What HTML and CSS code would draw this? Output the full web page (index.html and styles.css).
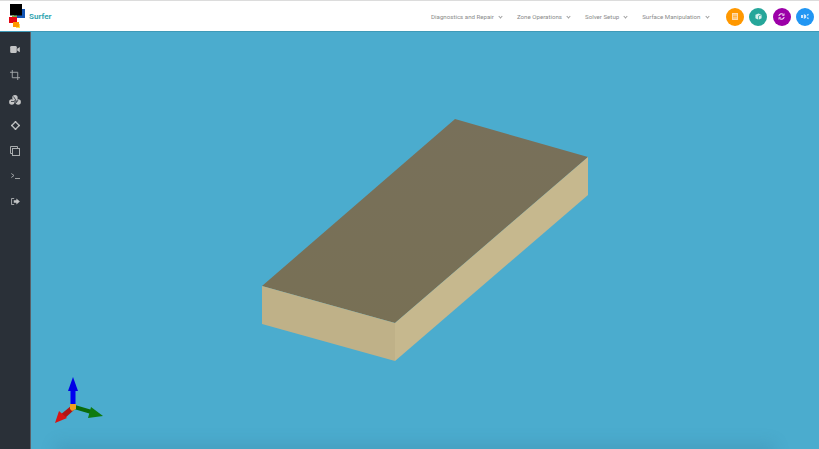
FILE: index.html
```html
<!DOCTYPE html>
<html lang="en">
<head>
  <meta charset="UTF-8" />
  <meta name="viewport" content="width=device-width, initial-scale=1" />
  <title>Surfer</title>
  <link rel="stylesheet" href="styles.css">
</head>
<body>
  <header class="topbar">
    <a class="brand" href="#">
      <svg class="brand-logo" width="18" height="26" viewBox="0 0 18 26">
        <rect x="5" y="5" width="11" height="9" fill="#1255b5" />
        <rect x="1" y="0" width="12" height="11.500" fill="#000" />
        <rect x="3" y="11.500" width="5" height="3" fill="#7cb342" />
        <rect x="0" y="13" width="8" height="6" fill="#e30613" />
        <rect x="7" y="20" width="4" height="4" fill="#ffe14d" />
        <rect x="4" y="18" width="6" height="5" fill="#ff9800" />
      </svg>
      <span class="brand-name">Surfer</span>
    </a>

    <nav class="menu">
      <a href="#">Diagnostics and Repair <i class="caret"></i></a>
      <a href="#">Zone Operations <i class="caret"></i></a>
      <a href="#">Solver Setup <i class="caret"></i></a>
      <a href="#">Surface Manipulation <i class="caret"></i></a>
    </nav>

    <div class="actions">
      <button class="round orange">
        <svg width="6" height="7" viewBox="0 0 6 7"><path d="M0 0h6v7H0z" fill="#ffdcae" /><path d="M1 2h4M1 3.500h4M1 5h4" stroke="#ff9800" stroke-width=".6" /></svg>
      </button>
      <button class="round teal">
        <svg width="7" height="7" viewBox="0 0 8 8"><path d="M4 .5 7.500 2v4L4 7.700.5 6V2z" fill="#d8f0ed" /><path d="M4 3.400 7.500 2M4 3.400V8" stroke="#26a69a" stroke-width=".8" /></svg>
      </button>
      <button class="round purple">
        <svg width="7" height="7" viewBox="0 0 8 8" fill="none" stroke="#f0d8f2" stroke-width="1.300"><path d="M1 3.400A3 3 0 0 1 6.300 2M7 4.600A3 3 0 0 1 1.700 6" /><path d="M7 .5v2.400H4.800M1 7.500V5.100h2.200" stroke-width=".9" /></svg>
      </button>
      <button class="round blue">
        <svg width="8" height="7" viewBox="0 0 10 8" fill="#cfe7fc"><path d="M0 2h2.500v4H0zM3.500 1l3 1.500v3l-3 1.500z" /><path d="M7.500 1.500 9.500 .5v2l-2 .5zM7.500 5l2 .5v2l-2-1z" /></svg>
      </button>
    </div>
  </header>

  <div class="workspace">
    <aside class="sidebar">
      <a href="#">
        <svg width="10" height="7" viewBox="0 0 11 8"><rect width="7.500" height="8" rx="1.500" fill="#c4c5c6" /><path d="M8 3 11 1v6L8 5z" fill="#c4c5c6" /></svg>
      </a>
      <a href="#">
        <svg width="10" height="10" viewBox="0 0 11 11" fill="none" stroke="#a9acae" stroke-width="1"><path d="M2.500 0v8.500H11M0 2.500h8.500V11" /></svg>
      </a>
      <a href="#">
        <svg width="12" height="10" viewBox="0 0 12 10" fill="#c4c5c6"><circle cx="2.800" cy="7" r="2.700" /><circle cx="9.200" cy="7" r="2.700" /><circle cx="6" cy="2.800" r="2.700" /><path d="M4.500 1.500 8 7M2 6.500h3M9 5l-2 3" stroke="#2a3038" stroke-width=".8" /></svg>
      </a>
      <a href="#">
        <svg width="9" height="9" viewBox="0 0 10 10"><path d="M5 .8 9.200 5 5 9.200 .8 5z" fill="none" stroke="#b8babc" stroke-width="1.500" /><circle cx="5" cy=".9" r=".9" fill="#c4c5c6" /><circle cx="5" cy="9.100" r=".9" fill="#c4c5c6" /><circle cx=".9" cy="5" r=".9" fill="#c4c5c6" /><circle cx="9.100" cy="5" r=".9" fill="#c4c5c6" /></svg>
      </a>
      <a href="#">
        <svg width="10" height="10" viewBox="0 0 10 10" fill="none" stroke="#a9acae" stroke-width="1"><path d="M7.500 2.500V.5h-7v7h2" /><rect x="2.500" y="2.500" width="7" height="7" /></svg>
      </a>
      <a href="#">
        <svg width="9" height="6" viewBox="0 0 9 6" fill="none" stroke="#a9acae" stroke-width=".9"><path d="M.3.500 3 2.500.3 4.500M4 5.500h5" /></svg>
      </a>
      <a href="#">
        <svg width="9" height="7" viewBox="0 0 10 8"><path d="M3.500.5H.5v7h3" fill="none" stroke="#b8babc" /><path d="M3 2.500h3V.500L10 4 6 7.500v-2H3z" fill="#c4c5c6" /></svg>
      </a>
    </aside>

    <main class="viewport">
      <svg class="scene" viewBox="31 32 788 417" preserveAspectRatio="none">
        <defs>
          <linearGradient id="topFace" x1="0" y1="0" x2="0" y2="1">
            <stop offset="0" stop-color="#78705a" />
            <stop offset="1" stop-color="#787055" />
          </linearGradient>
        </defs>
        <!-- box -->
        <polygon points="455,119 588,157 395,323 262,286" fill="url(#topFace)" />
        <polygon points="262,286 395,323 395,361 262,324" fill="#bfb188" />
        <polygon points="395,323 588,157 588,195 395,361" fill="#c6b88e" />

        <!-- axes -->
        <polygon points="70.500,388 70.500,406 75.500,406 75.500,388" fill="#0000f0" />
        <polygon points="73,377 78,391 68,391" fill="#0000e6" />
        <polygon points="75,405 92,410 91,414 74,409" fill="#0b6b0b" />
        <polygon points="103,416 88,418 91,407" fill="#0f7a0f" />
        <polygon points="71,406 75,409 64,419 60,415" fill="#b01414" />
        <polygon points="55,423 59,411 67,418" fill="#d81414" />
        <polygon points="70,404 76,404 76,409 72,411 70,409" fill="#f0a020" />
      </svg>
      <div class="floor-shade"></div>
    </main>
  </div>
</body>
</html>
```

FILE: styles.css
```css
:root {
  --fundo: #4bacce;
  --lateral: #2a3038;
  --texto-menu: #8b8b8b;
}

html,
body {
  height: 100%;
}

body {
  margin: 0;
  display: flex;
  flex-direction: column;
  overflow: hidden;
  font-family: Roboto, "Liberation Sans", sans-serif;
  background: var(--fundo);
}

.topbar {
  height: 30px;
  display: flex;
  align-items: center;
  flex-shrink: 0;
  background: #fff;
  border-top: 1px solid #dcdcdc;
  border-bottom: 1px solid #3f9ab8;
}

.brand {
  display: flex;
  align-items: center;
  margin-left: 9px;
  padding-top: 2px;
  text-decoration: none;
}

.brand-name {
  margin-left: 2px;
  margin-top: -2px;
  font-size: 8px;
  font-weight: 700;
  color: #34a6b2;
}

.menu {
  display: flex;
  gap: 14px;
  margin-left: auto;
  padding-top: 1px;
}

.menu a {
  display: flex;
  align-items: center;
  font-size: 6.150px;
  color: var(--texto-menu);
  text-decoration: none;
}

.caret {
  width: 2px;
  height: 2px;
  margin-left: 5px;
  margin-right: 1px;
  margin-top: -1px;
  border-right: 0.6px solid #a0a0a0;
  border-bottom: 0.6px solid #a0a0a0;
  transform: rotate(45deg);
}

.actions {
  display: flex;
  gap: 5.500px;
  margin-left: 16px;
  margin-right: 5px;
  padding-top: 1px;
}

.round {
  width: 18px;
  height: 18px;
  padding: 0;
  display: flex;
  align-items: center;
  justify-content: center;
  border: none;
  border-radius: 50%;
}

.orange { background: #ff9800; }
.teal { background: #26a69a; }
.purple { background: #9c00a8; }
.blue { background: #2196f3; }

.workspace {
  flex: 1;
  display: flex;
  min-height: 0;
}

.sidebar {
  width: 30px;
  flex-shrink: 0;
  display: flex;
  flex-direction: column;
  align-items: center;
  padding-top: 4.500px;
  background: var(--lateral);
  border-right: 1px solid #5a6068;
}

.sidebar a {
  height: 25.400px;
  display: flex;
  align-items: center;
  justify-content: center;
}

.viewport {
  flex: 1;
  position: relative;
  overflow: hidden;
}

.scene {
  display: block;
  width: 100%;
  height: 100%;
}

.floor-shade {
  position: absolute;
  left: 30px;
  right: 50px;
  bottom: -14px;
  height: 14px;
  box-shadow: 0 0 16px 5px rgba(50, 110, 140, 0.22);
}
```
